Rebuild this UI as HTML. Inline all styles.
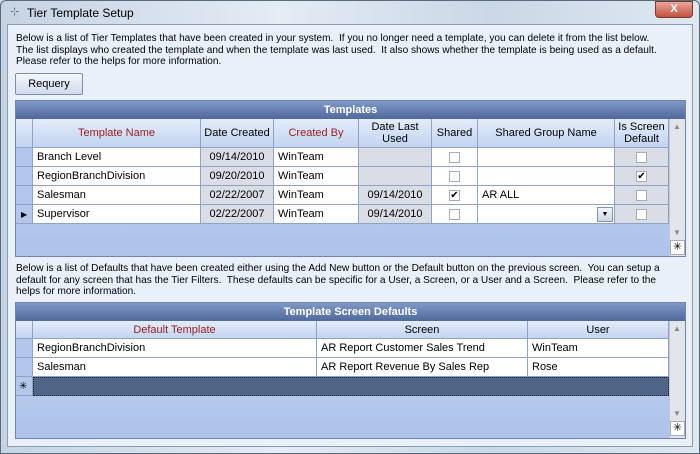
<!DOCTYPE html>
<html><head><style>
*{box-sizing:border-box;margin:0;padding:0}
body{width:700px;height:454px;background:#cfd9e6;font-family:"Liberation Sans",sans-serif;font-size:11px;color:#000;position:relative;overflow:hidden}
.a{position:absolute}
.frame{left:0;top:0;width:700px;height:454px;background:linear-gradient(90deg,#c6d3e3,#e4ecf4 40%,#cad7e6 70%,#dfe8f1);border:1px solid #5a6b80;border-radius:6px 6px 0 0}
.client{left:7px;top:24px;width:686px;height:423px;background:#e9f0fa;border:1px solid #8c9cb0}
.t{white-space:nowrap;line-height:12px}
.p{font-size:10.1px;line-height:11.6px}
.cap{background:linear-gradient(#7f98c6,#50689c);color:#fff;font-weight:bold;text-align:center;line-height:18px;font-size:11px}
.hdr{background:linear-gradient(#e3ecfa,#c3d4f1);border-right:1px solid #8fa3c6;border-bottom:1px solid #8fa3c6;text-align:center;display:flex;align-items:center;justify-content:center;line-height:12px}
.red{color:#9b1c1c}
.cell{border-right:1px solid #8fa3c6;border-bottom:1px solid #8fa3c6;background:#fff;padding-left:4px;line-height:18px;white-space:nowrap;overflow:hidden}
.g{background:#dadde6}
.rh{background:#b3c6ec;border-right:1px solid #8fa3c6;border-bottom:1px solid #8fa3c6}
.cb{width:11px;height:11px;border:1px solid #a5acb8;background:#fff;margin:4px auto 0;font-size:10px;line-height:9px;text-align:center}
.sb{background:#e2e5ec;border-left:1px solid #c0c8d4}
</style></head><body>
<div class="a frame"></div>
<div class="a t" style="left:10px;top:6px;color:#666">⊹</div>
<div class="a t" style="left:27px;top:7px;font-size:12px">Tier Template Setup</div>
<div class="a" style="left:655px;top:1px;width:38px;height:17px;background:linear-gradient(#e8a79a,#c4513c);border:1px solid #7a3b30;border-radius:0 0 4px 4px;color:#fff;text-align:center;font-weight:bold;line-height:15px;font-size:11px">X</div>
<div class="a client"></div>
<div class="a t p" style="left:16px;top:33px">Below is a list of Tier Templates that have been created in your system.&nbsp; If you no longer need a template, you can delete it from the list below.<br>The list displays who created the template and when the template was last used.&nbsp; It also shows whether the template is being used as a default.<br>Please refer to the helps for more information.</div>
<div class="a" style="left:15px;top:73px;width:68px;height:22px;background:linear-gradient(#f4f7fc,#cfdaee);border:1px solid #7f8fa8;border-radius:2px;text-align:center;line-height:20px">Requery</div>

<div class="a" style="left:15px;top:100px;width:671px;height:157px;background:linear-gradient(#c4d5f2,#aec3ea);border:1px solid #6f85ad"></div>
<div class="a cap" style="left:16px;top:101px;width:669px;height:18px">Templates</div>
<div class="a hdr" style="left:16px;top:119px;width:17px;height:29px"></div>
<div class="a hdr red" style="left:33px;top:119px;width:168px;height:29px">Template Name</div>
<div class="a hdr" style="left:201px;top:119px;width:73px;height:29px">Date Created</div>
<div class="a hdr red" style="left:274px;top:119px;width:85px;height:29px">Created By</div>
<div class="a hdr" style="left:359px;top:119px;width:73px;height:29px">Date Last<br>Used</div>
<div class="a hdr" style="left:432px;top:119px;width:46px;height:29px">Shared</div>
<div class="a hdr" style="left:478px;top:119px;width:137px;height:29px">Shared Group Name</div>
<div class="a hdr" style="left:615px;top:119px;width:54px;height:29px">Is Screen<br>Default</div>
<div class="a sb" style="left:669px;top:119px;width:16px;height:137px"></div>
<div class="a t" style="left:673px;top:121px;color:#888;font-size:8px">▲</div>
<div class="a t" style="left:673px;top:227px;color:#888;font-size:8px">▼</div>
<div class="a" style="left:670px;top:240px;width:15px;height:15px;background:#fff;border:1px solid #aab;text-align:center;line-height:13px;font-size:11px">✳</div>

<div class="a rh" style="left:16px;top:148px;width:17px;height:19px"></div>
<div class="a cell" style="left:33px;top:148px;width:168px;height:19px">Branch Level</div>
<div class="a cell g" style="left:201px;top:148px;width:73px;height:19px;text-align:center;padding:0">09/14/2010</div>
<div class="a cell" style="left:274px;top:148px;width:85px;height:19px">WinTeam</div>
<div class="a cell g" style="left:359px;top:148px;width:73px;height:19px"></div>
<div class="a cell" style="left:432px;top:148px;width:46px;height:19px;padding:0"><div class="cb"></div></div>
<div class="a cell" style="left:478px;top:148px;width:137px;height:19px"></div>
<div class="a cell g" style="left:615px;top:148px;width:54px;height:19px;padding:0"><div class="cb"></div></div>
<div class="a rh" style="left:16px;top:167px;width:17px;height:19px"></div>
<div class="a cell" style="left:33px;top:167px;width:168px;height:19px">RegionBranchDivision</div>
<div class="a cell g" style="left:201px;top:167px;width:73px;height:19px;text-align:center;padding:0">09/20/2010</div>
<div class="a cell" style="left:274px;top:167px;width:85px;height:19px">WinTeam</div>
<div class="a cell g" style="left:359px;top:167px;width:73px;height:19px"></div>
<div class="a cell" style="left:432px;top:167px;width:46px;height:19px;padding:0"><div class="cb"></div></div>
<div class="a cell" style="left:478px;top:167px;width:137px;height:19px"></div>
<div class="a cell g" style="left:615px;top:167px;width:54px;height:19px;padding:0"><div class="cb">✔</div></div>
<div class="a rh" style="left:16px;top:186px;width:17px;height:19px"></div>
<div class="a cell" style="left:33px;top:186px;width:168px;height:19px">Salesman</div>
<div class="a cell g" style="left:201px;top:186px;width:73px;height:19px;text-align:center;padding:0">02/22/2007</div>
<div class="a cell" style="left:274px;top:186px;width:85px;height:19px">WinTeam</div>
<div class="a cell g" style="left:359px;top:186px;width:73px;height:19px;text-align:center;padding:0">09/14/2010</div>
<div class="a cell" style="left:432px;top:186px;width:46px;height:19px;padding:0"><div class="cb">✔</div></div>
<div class="a cell" style="left:478px;top:186px;width:137px;height:19px">AR ALL</div>
<div class="a cell g" style="left:615px;top:186px;width:54px;height:19px;padding:0"><div class="cb"></div></div>
<div class="a rh" style="left:16px;top:205px;width:17px;height:19px;font-size:8px;line-height:19px;padding-left:5px">▶</div>
<div class="a cell" style="left:33px;top:205px;width:168px;height:19px">Supervisor</div>
<div class="a cell g" style="left:201px;top:205px;width:73px;height:19px;text-align:center;padding:0">02/22/2007</div>
<div class="a cell" style="left:274px;top:205px;width:85px;height:19px">WinTeam</div>
<div class="a cell g" style="left:359px;top:205px;width:73px;height:19px;text-align:center;padding:0">09/14/2010</div>
<div class="a cell" style="left:432px;top:205px;width:46px;height:19px;padding:0"><div class="cb"></div></div>
<div class="a cell" style="left:478px;top:205px;width:137px;height:19px"></div>
<div class="a" style="left:597px;top:207px;width:16px;height:15px;background:linear-gradient(#f2f5fb,#cdd8ea);border:1px solid #7f93b8;font-size:7px;text-align:center;line-height:14px">▼</div>
<div class="a cell g" style="left:615px;top:205px;width:54px;height:19px;padding:0"><div class="cb"></div></div>

<div class="a t p" style="left:16px;top:263px">Below is a list of Defaults that have been created either using the Add New button or the Default button on the previous screen.&nbsp; You can setup a<br>default for any screen that has the Tier Filters.&nbsp; These defaults can be specific for a User, a Screen, or a User and a Screen.&nbsp; Please refer to the<br>helps for more information.</div>

<div class="a" style="left:15px;top:302px;width:671px;height:137px;background:linear-gradient(#c4d5f2,#aec3ea);border:1px solid #6f85ad"></div>
<div class="a cap" style="left:16px;top:303px;width:669px;height:18px">Template Screen Defaults</div>
<div class="a hdr" style="left:16px;top:321px;width:17px;height:18px"></div>
<div class="a hdr red" style="left:33px;top:321px;width:284px;height:18px">Default Template</div>
<div class="a hdr" style="left:317px;top:321px;width:211px;height:18px">Screen</div>
<div class="a hdr" style="left:528px;top:321px;width:141px;height:18px">User</div>
<div class="a sb" style="left:669px;top:321px;width:16px;height:117px"></div>
<div class="a t" style="left:673px;top:323px;color:#888;font-size:8px">▲</div>
<div class="a t" style="left:673px;top:408px;color:#888;font-size:8px">▼</div>
<div class="a" style="left:670px;top:421px;width:15px;height:15px;background:#fff;border:1px solid #aab;text-align:center;line-height:13px;font-size:11px">✳</div>
<div class="a rh" style="left:16px;top:339px;width:17px;height:19px"></div>
<div class="a cell" style="left:33px;top:339px;width:284px;height:19px">RegionBranchDivision</div>
<div class="a cell" style="left:317px;top:339px;width:211px;height:19px">AR Report Customer Sales Trend</div>
<div class="a cell" style="left:528px;top:339px;width:141px;height:19px">WinTeam</div>
<div class="a rh" style="left:16px;top:358px;width:17px;height:19px"></div>
<div class="a cell" style="left:33px;top:358px;width:284px;height:19px">Salesman</div>
<div class="a cell" style="left:317px;top:358px;width:211px;height:19px">AR Report Revenue By Sales Rep</div>
<div class="a cell" style="left:528px;top:358px;width:141px;height:19px">Rose</div>
<div class="a rh" style="left:16px;top:377px;width:17px;height:19px;font-size:10px;line-height:19px;padding-left:3px">✳</div>
<div class="a" style="left:33px;top:377px;width:636px;height:19px;background:#4f6688;border:1px dotted #222"></div>
</body></html>
